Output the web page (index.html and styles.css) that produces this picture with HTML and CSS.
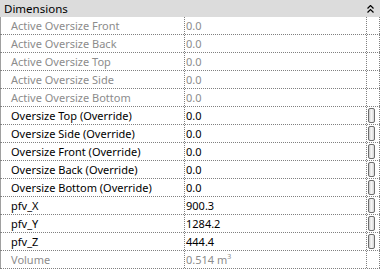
FILE: index.html
```html
<!DOCTYPE html>
<html lang="en">
<head>
  <meta charset="UTF-8" />
  <title>Dimensions</title>
  <link rel="stylesheet" href="styles.css">
</head>
<body>
  <div class="panel">
    <div class="group">
      <span>Dimensions</span>
      <svg class="collapse" width="7" height="8" viewBox="0 0 7 8">
        <path d="M0.5 3.5 L3.5 0.5 L6.5 3.5 M0.5 7.5 L3.5 4.5 L6.5 7.5" fill="none" stroke="#000" stroke-width="1.2"/>
      </svg>
    </div>

    <div class="row off"><div class="name">Active Oversize Front</div><div class="val">0.0</div><div class="btn"></div></div>
    <div class="row off"><div class="name">Active Oversize Back</div><div class="val">0.0</div><div class="btn"></div></div>
    <div class="row off"><div class="name">Active Oversize Top</div><div class="val">0.0</div><div class="btn"></div></div>
    <div class="row off"><div class="name">Active Oversize Side</div><div class="val">0.0</div><div class="btn"></div></div>
    <div class="row off"><div class="name">Active Oversize Bottom</div><div class="val">0.0</div><div class="btn"></div></div>
    <div class="row"><div class="name">Oversize Top (Override)</div><div class="val">0.0</div><div class="btn"><span class="param"></span></div></div>
    <div class="row"><div class="name">Oversize Side (Override)</div><div class="val">0.0</div><div class="btn"><span class="param"></span></div></div>
    <div class="row"><div class="name">Oversize Front (Override)</div><div class="val">0.0</div><div class="btn"><span class="param"></span></div></div>
    <div class="row"><div class="name">Oversize Back (Override)</div><div class="val">0.0</div><div class="btn"><span class="param"></span></div></div>
    <div class="row"><div class="name">Oversize Bottom (Override)</div><div class="val">0.0</div><div class="btn"><span class="param"></span></div></div>
    <div class="row"><div class="name">pfv_X</div><div class="val">900.3</div><div class="btn"><span class="param"></span></div></div>
    <div class="row"><div class="name">pfv_Y</div><div class="val">1284.2</div><div class="btn"><span class="param"></span></div></div>
    <div class="row"><div class="name">pfv_Z</div><div class="val">444.4</div><div class="btn"><span class="param"></span></div></div>
    <div class="row off"><div class="name">Volume</div><div class="val">0.514 m<sup>3</sup></div><div class="btn"></div></div>
  </div>
</body>
</html>
```

FILE: styles.css
```css
body {
  margin: 0;
  background: #fff;
  font-family: "Noto Sans", "Liberation Sans", sans-serif;
  font-size: 11px;
  color: #000;
}
.panel {
  width: 380px;
}
.group {
  height: 17px;
  background: #dcdcdc;
  display: flex;
  align-items: center;
  justify-content: space-between;
  padding: 0 6px 0 4px;
  box-sizing: border-box;
  font-size: 11.5px;
}
.collapse {
  margin-top: 1px;
}
.row {
  display: grid;
  grid-template-columns: 185px 182px 13px;
  height: 18px;
  border-bottom: 1px dotted #808080;
  box-sizing: border-box;
}
.name {
  border-left: 1px solid #a0a0a0;
  border-right: 1px dotted #808080;
  padding-left: 10px;
  line-height: 17px;
  white-space: nowrap;
}
.val {
  border-right: 1px dotted #808080;
  padding-left: 1px;
  line-height: 17px;
}
.val sup {
  font-size: 7px;
  vertical-align: 5px;
  line-height: 0;
}
.btn {
  border-right: 1px dotted #808080;
  display: flex;
  align-items: center;
  padding-left: 1px;
}
.param {
  width: 5px;
  height: 13px;
  border: 1px solid #6e6e6e;
  border-radius: 2px;
  background: linear-gradient(to right, #c8c8c8, #f8f8f8 45%, #d6d6d6);
}
.off {
  color: #8c8c8c;
}
```
